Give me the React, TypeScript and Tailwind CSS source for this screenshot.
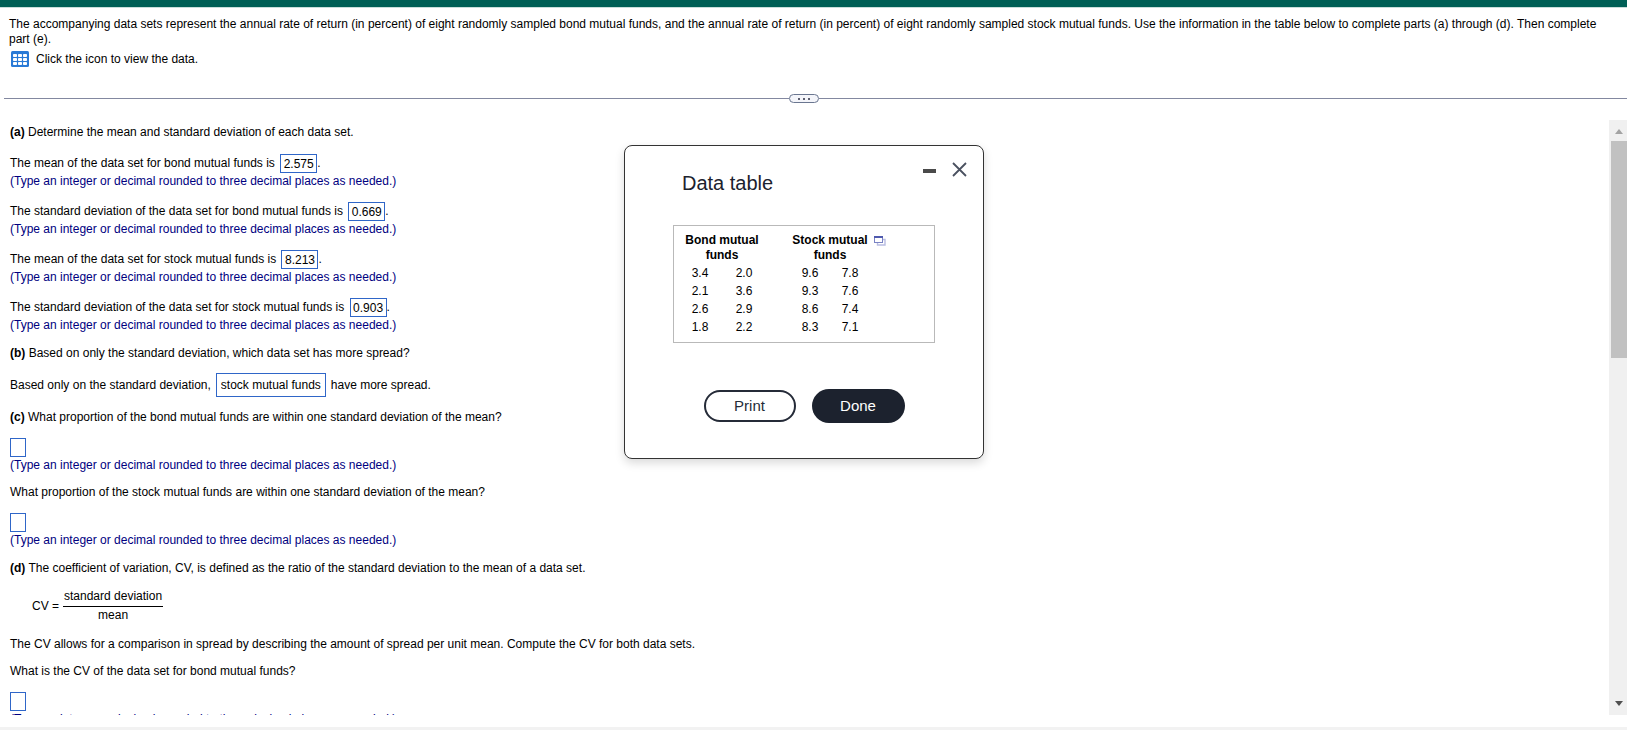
import React, { useState } from 'react';

const HINT = '(Type an integer or decimal rounded to three decimal places as needed.)';

const rows = [
  ['3.4', '2.0', '9.6', '7.8'],
  ['2.1', '3.6', '9.3', '7.6'],
  ['2.6', '2.9', '8.6', '7.4'],
  ['1.8', '2.2', '8.3', '7.1'],
];

interface AnswerProps {
  label: string;
  initial: string;
}

const Answer: React.FC<AnswerProps> = ({ label, initial }) => {
  const [value, setValue] = useState(initial);

  return (
    <label className="flex items-center h-[19px] leading-[15px]">
      <span className="whitespace-pre">{label} </span>
      <input
        type="text"
        value={value}
        onChange={(e) => setValue(e.target.value)}
        className="w-[37px] h-[19px] ml-0.5 border border-[#2f66c8] bg-white text-center outline-none"
      />
      <span>.</span>
    </label>
  );
};

const EmptyAnswer: React.FC<{ label: string }> = ({ label }) => {
  const [value, setValue] = useState('');

  return (
    <input
      type="text"
      aria-label={label}
      value={value}
      onChange={(e) => setValue(e.target.value)}
      className="block w-4 h-[19px] border border-[#2f66c8] bg-white outline-none"
    />
  );
};

const Hint = () => <p className="text-[#00007f]">{HINT}</p>;

const TableIcon = () => (
  <svg width="18" height="16" viewBox="0 0 18 16">
    <rect width="18" height="16" rx="1.5" fill="#2a7ad6" />
    <g fill="#fff">
      {[3, 7, 11].map((y) =>
        [2, 7, 12].map((x) => <rect key={`${x}-${y}`} x={x} y={y} width="4" height="3" rx="0.8" />)
      )}
    </g>
  </svg>
);

const CopyIcon = () => (
  <svg width="12" height="10" viewBox="0 0 12 10">
    <path d="M3.5 7v2h7.5v-5.5H9" fill="none" stroke="#b9bde2" strokeWidth="1.4" />
    <rect x="0.5" y="0.5" width="8" height="6" fill="#fff" stroke="#7a83c4" />
    <path d="M0 1h9" stroke="#4f5aae" strokeWidth="2" />
  </svg>
);

const DataTableDialog: React.FC<{ onClose: () => void }> = ({ onClose }) => (
  <div
    role="dialog"
    aria-labelledby="dialog-title"
    className="absolute left-[624px] top-[145px] w-[360px] pb-[35px] bg-white border border-[#333] rounded-lg shadow-[0_4px_10px_rgba(0,0,0,0.15)]"
  >
    <div className="flex justify-end items-center gap-4 pt-3 pr-4 h-[34px]">
      <button type="button" aria-label="Minimize" className="pt-1">
        <span className="block w-[13px] h-1 bg-[#4a4a4a]"></span>
      </button>
      <button type="button" aria-label="Close" onClick={onClose}>
        <svg width="15" height="15" viewBox="0 0 15 15" stroke="#4a5160" strokeWidth="1.8">
          <path d="M1 1l13 13M14 1L1 14" />
        </svg>
      </button>
    </div>

    <h2 id="dialog-title" className="pl-[57px] -mt-[9px] text-xl leading-6 text-[#1c222e]">Data table</h2>

    <div className="flex items-start mt-[30px] mx-12 h-[118px] border border-[#b9b9b9] pt-[7px] pl-1">
      <table className="table-fixed w-[192px] text-center leading-[18px]">
        <colgroup>
          <col className="w-[44px]" />
          <col className="w-[44px]" />
          <col className="w-[24px]" />
          <col className="w-[40px]" />
          <col className="w-[40px]" />
        </colgroup>
        <thead>
          <tr className="leading-[15px]">
            <th colSpan={2} className="pb-px">Bond mutual<br />funds</th>
            <td></td>
            <th colSpan={2} className="pb-px">Stock mutual<br />funds</th>
          </tr>
        </thead>
        <tbody>
          {rows.map((r) => (
            <tr key={r[0]}>
              <td>{r[0]}</td>
              <td>{r[1]}</td>
              <td></td>
              <td>{r[2]}</td>
              <td>{r[3]}</td>
            </tr>
          ))}
        </tbody>
      </table>
      <button type="button" aria-label="Copy data" className="mt-[3px] ml-1">
        <CopyIcon />
      </button>
    </div>

    <div className="flex items-center justify-center gap-4 mt-[46px] text-[15px]">
      <button type="button" className="w-[92px] h-8 rounded-full border-2 border-[#252b38] text-[#252b38]">
        Print
      </button>
      <button type="button" onClick={onClose} className="w-[93px] h-[34px] rounded-full bg-[#1c222e] text-white">
        Done
      </button>
    </div>
  </div>
);

export default function App() {
  const [open, setOpen] = useState(true);

  return (
    <div className="relative h-screen flex flex-col bg-white text-black text-xs leading-4 font-['Liberation_Sans',Arial,sans-serif] overflow-hidden">
      <div className="h-2 shrink-0 bg-[#005f56] border-b border-[#c9dedb]"></div>

      {/* Problem statement */}
      <header className="shrink-0 h-[86px] pt-[9px] pl-[9px] pr-5">
        <p className="leading-[15px]">
          The accompanying data sets represent the annual rate of return (in percent) of eight randomly sampled bond mutual funds, and the annual rate of return (in percent) of eight randomly sampled stock mutual funds. Use the information in the table below to complete parts (a) through (d). Then complete part (e).
        </p>
        <button type="button" onClick={() => setOpen(true)} className="flex items-center gap-[7px] mt-1 pl-0.5">
          <TableIcon />
          Click the icon to view the data.
        </button>
      </header>

      {/* Splitter */}
      <div className="flex items-center shrink-0 h-[9px] pl-1">
        <div className="flex-1 h-px bg-[#8388a0]"></div>
        <button
          type="button"
          aria-label="Resize"
          className="flex items-center justify-center gap-[3px] w-[30px] h-[9px] rounded-full border border-[#6a7690] bg-[#f4f5fa]"
        >
          <span className="size-0.5 bg-[#5d5f70]"></span>
          <span className="size-0.5 bg-[#5d5f70]"></span>
          <span className="size-0.5 bg-[#5d5f70]"></span>
        </button>
        <div className="flex-1 h-px bg-[#8388a0]"></div>
        <div className="w-6 h-px bg-[#8388a0]"></div>
      </div>

      <div className="flex flex-1 min-h-0 mt-[17px]">
        {/* Questions */}
        <main className="flex-1 min-w-0 overflow-hidden pt-1 pl-2.5">
          <p><b>(a)</b> Determine the mean and standard deviation of each data set.</p>
          <div className="flex flex-col gap-[13px] mt-3.5">
            <div>
              <Answer label="The mean of the data set for bond mutual funds is" initial="2.575" />
              <Hint />
            </div>
            <div>
              <Answer label="The standard deviation of the data set for bond mutual funds is" initial="0.669" />
              <Hint />
            </div>
            <div>
              <Answer label="The mean of the data set for stock mutual funds is" initial="8.213" />
              <Hint />
            </div>
            <div>
              <Answer label="The standard deviation of the data set for stock mutual funds is" initial="0.903" />
              <Hint />
            </div>
          </div>

          <p className="mt-3"><b>(b)</b> Based on only the standard deviation, which data set has more spread?</p>
          <label className="flex items-center gap-[5px] mt-3">
            Based only on the standard deviation,
            <select className="appearance-none w-[110px] h-6 pl-1 border border-[#2f66c8] bg-white outline-none">
              <option>stock mutual funds</option>
              <option>bond mutual funds</option>
            </select>
            have more spread.
          </label>

          <p className="mt-3"><b>(c)</b> What proportion of the bond mutual funds are within one standard deviation of the mean?</p>
          <div className="mt-[13px]">
            <EmptyAnswer label="Proportion of bond mutual funds" />
            <Hint />
          </div>
          <p className="mt-[11px]">What proportion of the stock mutual funds are within one standard deviation of the mean?</p>
          <div className="mt-[13px]">
            <EmptyAnswer label="Proportion of stock mutual funds" />
            <Hint />
          </div>

          <p className="mt-3"><b>(d)</b> The coefficient of variation, CV, is defined as the ratio of the standard deviation to the mean of a data set.</p>
          <div className="flex items-center gap-1 mt-3 pl-[22px]">
            <span>CV =</span>
            <span className="flex flex-col text-center">
              <span className="border-b border-black px-px pb-0.5">standard deviation</span>
              <span>mean</span>
            </span>
          </div>
          <p className="mt-[13px]">The CV allows for a comparison in spread by describing the amount of spread per unit mean. Compute the CV for both data sets.</p>
          <p className="mt-[11px]">What is the CV of the data set for bond mutual funds?</p>
          <div className="mt-[13px]">
            <EmptyAnswer label="CV of bond mutual funds" />
            <Hint />
          </div>
        </main>

        {/* Scroll bar */}
        <div className="flex flex-col items-center w-[18px] shrink-0 bg-[#f0f0f0]">
          <svg className="shrink-0 ml-0.5" width="16" height="21" viewBox="0 0 16 21">
            <path d="M4 14h8L8 9z" fill="#a3a3a3" />
          </svg>
          <div className="self-end w-4 h-[217px] bg-[#c1c1c1]"></div>
          <svg className="shrink-0 ml-0.5 mt-auto" width="16" height="21" viewBox="0 0 16 21">
            <path d="M4 7h8l-4 5z" fill="#505050" />
          </svg>
        </div>
      </div>

      <footer className="shrink-0 mt-3 h-[3px] bg-[#f2f2f2]"></footer>

      {open && <DataTableDialog onClose={() => setOpen(false)} />}
    </div>
  );
}
